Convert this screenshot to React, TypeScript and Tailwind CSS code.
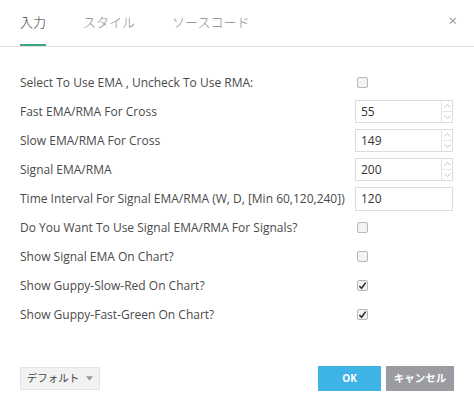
import React from 'react';

type Row =
  | { kind: 'check'; label: string; checked: boolean }
  | { kind: 'number'; label: string; value: string }
  | { kind: 'text'; label: string; value: string };

const rows: Row[] = [
  { kind: 'check', label: 'Select To Use EMA , Uncheck To Use RMA:', checked: false },
  { kind: 'number', label: 'Fast EMA/RMA For Cross', value: '55' },
  { kind: 'number', label: 'Slow EMA/RMA For Cross', value: '149' },
  { kind: 'number', label: 'Signal EMA/RMA', value: '200' },
  { kind: 'text', label: 'Time Interval For Signal EMA/RMA (W, D, [Min 60,120,240])', value: '120' },
  { kind: 'check', label: 'Do You Want To Use Signal EMA/RMA For Signals?', checked: false },
  { kind: 'check', label: 'Show Signal EMA On Chart?', checked: false },
  { kind: 'check', label: 'Show Guppy-Slow-Red On Chart?', checked: true },
  { kind: 'check', label: 'Show Guppy-Fast-Green On Chart?', checked: true },
];

function Checkbox({ checked }: { checked: boolean }) {
  return (
    <div className="ml-[2px] flex h-[11px] w-[11px] items-center justify-center rounded-[2px] border border-[#b8b8b8] bg-[#f3f3f3]">
      {checked && (
        <svg width="9" height="9" viewBox="0 0 10 10">
          <path d="M1.5 5.5 L4 8 L8.5 1.8" fill="none" stroke="#333" strokeWidth="1.8" />
        </svg>
      )}
    </div>
  );
}

function NumberBox({ value }: { value: string }) {
  return (
    <div className="flex h-[23px] w-[98px] border border-[#dcdcdc] bg-white">
      <div className="flex flex-1 items-center pl-[5px] text-[12px] text-[#333]">{value}</div>
      <div className="flex w-[11px] flex-col border-l border-[#e4e4e4]">
        <div className="flex flex-1 items-center justify-center border-b border-[#e8e8e8]">
          <svg width="7" height="4" viewBox="0 0 7 4">
            <path d="M0.5 3.5 L3.5 0.5 L6.5 3.5" fill="none" stroke="#b5b5b5" strokeWidth="0.8" />
          </svg>
        </div>
        <div className="flex flex-1 items-center justify-center">
          <svg width="7" height="4" viewBox="0 0 7 4">
            <path d="M0.5 0.5 L3.5 3.5 L6.5 0.5" fill="none" stroke="#b5b5b5" strokeWidth="0.8" />
          </svg>
        </div>
      </div>
    </div>
  );
}

export default function App() {
  return (
    <div
      className="flex h-[412px] w-[474px] flex-col bg-white text-[#4a4a4a]"
      style={{ fontFamily: '"Open Sans", "Noto Sans CJK JP", sans-serif' }}
    >
      <div className="relative flex h-[47px] items-end border-b border-[#e2e2e2] px-5">
        <div className="flex gap-[37px]">
          <div className="border-b-2 border-[#3aa57a] pb-[15px] text-[13px] leading-none font-light text-[#333]">入力</div>
          <div className="pb-[17px] text-[13px] leading-none font-light text-[#888]">スタイル</div>
          <div className="pb-[17px] text-[13px] leading-none font-light text-[#888]">ソースコード</div>
        </div>
        <div className="absolute right-[17px] top-[13px] text-[15px] leading-none text-[#999]">×</div>
      </div>

      <div className="flex flex-col px-5 pt-[21px]">
        {rows.map((r, i) => (
          <div key={i} className="flex h-[29px] items-center">
            <div className="w-[335px] text-[12px]">{r.label}</div>
            {r.kind === 'check' && <Checkbox checked={r.checked} />}
            {r.kind === 'number' && <NumberBox value={r.value} />}
            {r.kind === 'text' && (
              <div className="flex h-[24px] w-[98px] items-center border border-[#dcdcdc] pl-[5px] text-[12px] text-[#333]">
                {r.value}
              </div>
            )}
          </div>
        ))}
      </div>

      <div className="mt-auto mb-[21px] flex items-center px-5">
        <div className="flex h-[23px] w-[80px] items-center justify-center gap-[7px] border border-[#e3e3e3] bg-[#f2f2f2] text-[10.5px] text-[#444]">
          <span>デフォルト</span>
          <svg width="7" height="5" viewBox="0 0 8 5">
            <path d="M0 0 L8 0 L4 5 Z" fill="#999" />
          </svg>
        </div>
        <div className="ml-auto flex h-[25px] w-[63px] items-center justify-center bg-[#3db3e6] text-[10px] font-bold text-white">
          OK
        </div>
        <div className="ml-[5px] flex h-[25px] w-[68px] items-center justify-center bg-[#9b9ca1] text-[10.5px] font-bold text-white">
          キャンセル
        </div>
      </div>
    </div>
  );
}
